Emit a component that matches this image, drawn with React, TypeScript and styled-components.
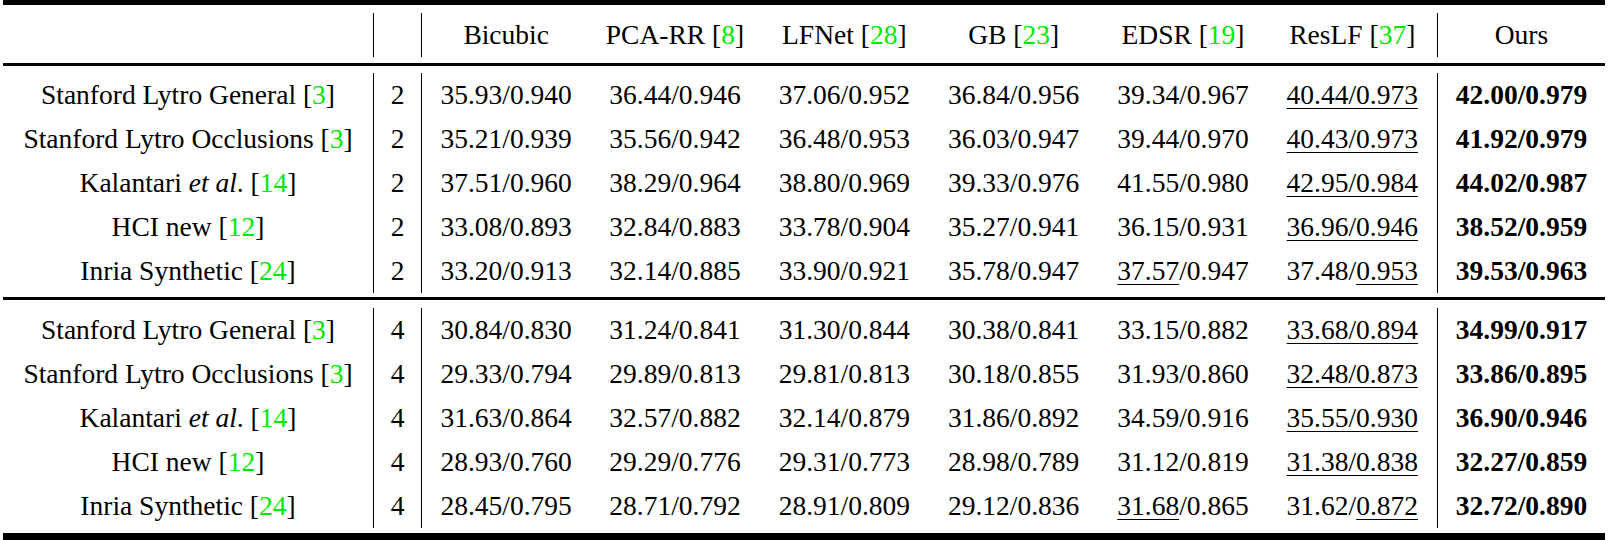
import React from "react";
import styled, { createGlobalStyle } from "styled-components";

const Global = createGlobalStyle`
  html, body { margin: 0; padding: 0; background: #fff; }
  body { font-family: "Liberation Serif", "Tinos", "DejaVu Serif", serif; color: #000; }
`;

const COLS = "370px 48px repeat(6, 169.33px) 168px";

const Table = styled.div`
  width: 1602px;
  margin-left: 3px;
  font-family: "Liberation Serif", "Tinos", "DejaVu Serif", serif;
  font-size: 27.5px;
  line-height: 1;
`;

const Rule = styled.div<{ $h: number }>`
  height: ${(p) => p.$h}px;
  background: #000;
`;

const Section = styled.div<{ $top: number; $bottom: number }>`
  padding: ${(p) => p.$top}px 0 ${(p) => p.$bottom}px;
`;

const Row = styled.div`
  display: grid;
  grid-template-columns: ${COLS};
  height: 44px;
`;

const Cell = styled.div<{ $sep?: boolean; $bold?: boolean }>`
  display: flex;
  align-items: center;
  justify-content: center;
  border-left: ${(p) => (p.$sep ? "1px solid #000" : "none")};
  font-weight: ${(p) => (p.$bold ? 700 : 400)};
  white-space: nowrap;
`;

const Text = styled.span`
  display: inline-block;
`;

const Cite = styled.span`
  color: #00e800;
`;

const Under = styled.span`
  text-decoration: underline;
  text-underline-offset: 4px;
  text-decoration-thickness: 1px;
`;

const Em = styled.i`
  font-style: italic;
`;

const heads: [string, string | null][] = [
  ["Bicubic", null],
  ["PCA-RR", "8"],
  ["LFNet", "28"],
  ["GB", "23"],
  ["EDSR", "19"],
  ["ResLF", "37"],
];

const names: React.ReactNode[] = [
  <>Stanford Lytro General [<Cite>3</Cite>]</>,
  <>Stanford Lytro Occlusions [<Cite>3</Cite>]</>,
  <>Kalantari <Em>et al</Em>. [<Cite>14</Cite>]</>,
  <>HCI new [<Cite>12</Cite>]</>,
  <>Inria Synthetic [<Cite>24</Cite>]</>,
];

const block2: string[][] = [
  ["35.93/0.940", "36.44/0.946", "37.06/0.952", "36.84/0.956", "39.34/0.967", "40.44/0.973|b", "42.00/0.979"],
  ["35.21/0.939", "35.56/0.942", "36.48/0.953", "36.03/0.947", "39.44/0.970", "40.43/0.973|b", "41.92/0.979"],
  ["37.51/0.960", "38.29/0.964", "38.80/0.969", "39.33/0.976", "41.55/0.980", "42.95/0.984|b", "44.02/0.987"],
  ["33.08/0.893", "32.84/0.883", "33.78/0.904", "35.27/0.941", "36.15/0.931", "36.96/0.946|b", "38.52/0.959"],
  ["33.20/0.913", "32.14/0.885", "33.90/0.921", "35.78/0.947", "37.57/0.947|p", "37.48/0.953|s", "39.53/0.963"],
];

const block4: string[][] = [
  ["30.84/0.830", "31.24/0.841", "31.30/0.844", "30.38/0.841", "33.15/0.882", "33.68/0.894|b", "34.99/0.917"],
  ["29.33/0.794", "29.89/0.813", "29.81/0.813", "30.18/0.855", "31.93/0.860", "32.48/0.873|b", "33.86/0.895"],
  ["31.63/0.864", "32.57/0.882", "32.14/0.879", "31.86/0.892", "34.59/0.916", "35.55/0.930|b", "36.90/0.946"],
  ["28.93/0.760", "29.29/0.776", "29.31/0.773", "28.98/0.789", "31.12/0.819", "31.38/0.838|b", "32.27/0.859"],
  ["28.45/0.795", "28.71/0.792", "28.91/0.809", "29.12/0.836", "31.68/0.865|p", "31.62/0.872|s", "32.72/0.890"],
];

function Value({ v }: { v: string }) {
  const [val, flag] = v.split("|");
  const [p, s] = val.split("/");
  if (flag === "b") return <Under>{val}</Under>;
  if (flag === "p")
    return (
      <Text>
        <Under>{p}</Under>/{s}
      </Text>
    );
  if (flag === "s")
    return (
      <Text>
        {p}/<Under>{s}</Under>
      </Text>
    );
  return <Text>{val}</Text>;
}

function Block({ scale, data, top, bottom }: { scale: string; data: string[][]; top: number; bottom: number }) {
  return (
    <Section $top={top} $bottom={bottom}>
      {data.map((r, i) => (
        <Row key={i}>
          <Cell>
            <Text>{names[i]}</Text>
          </Cell>
          <Cell $sep>{scale}</Cell>
          {r.map((v, j) => (
            <Cell key={j} $sep={j === 0 || j === 6} $bold={j === 6}>
              <Value v={v} />
            </Cell>
          ))}
        </Row>
      ))}
    </Section>
  );
}

export default function App() {
  return (
    <>
      <Global />
      <Table>
        <Rule $h={5} />
        <Section $top={8} $bottom={6}>
          <Row>
            <Cell />
            <Cell $sep />
            {heads.map(([h, c], i) => (
              <Cell key={h} $sep={i === 0}>
                <Text>
                  {h}
                  {c && (
                    <>
                      {" "}[<Cite>{c}</Cite>]
                    </>
                  )}
                </Text>
              </Cell>
            ))}
            <Cell $sep>Ours</Cell>
          </Row>
        </Section>
        <Rule $h={3} />
        <Block scale="2" data={block2} top={7} bottom={4} />
        <Rule $h={3} />
        <Block scale="4" data={block4} top={8} bottom={5} />
        <Rule $h={7} />
      </Table>
    </>
  );
}
